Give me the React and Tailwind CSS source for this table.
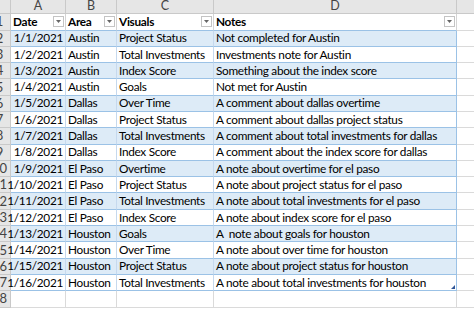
import React from 'react';

// --- Sheet data ---
const rows = [
  ['1/1/2021', 'Austin', 'Project Status', 'Not completed for Austin'],
  ['1/2/2021', 'Austin', 'Total Investments', 'Investments note for Austin'],
  ['1/3/2021', 'Austin', 'Index Score', 'Something about the index score'],
  ['1/4/2021', 'Austin', 'Goals', 'Not met for Austin'],
  ['1/5/2021', 'Dallas', 'Over Time', 'A comment about dallas overtime'],
  ['1/6/2021', 'Dallas', 'Project Status', 'A comment about dallas project status'],
  ['1/7/2021', 'Dallas', 'Total Investments', 'A comment about total investments for dallas'],
  ['1/8/2021', 'Dallas', 'Index Score', 'A comment about the index score for dallas'],
  ['1/9/2021', 'El Paso', 'Overtime', 'A note about overtime for el paso'],
  ['1/10/2021', 'El Paso', 'Project Status', 'A note about project status for el paso'],
  ['1/11/2021', 'El Paso', 'Total Investments', 'A note about total investments for el paso'],
  ['1/12/2021', 'El Paso', 'Index Score', 'A note about index score for el paso'],
  ['1/13/2021', 'Houston', 'Goals', 'A  note about goals for houston'],
  ['1/14/2021', 'Houston', 'Over Time', 'A note about over time for houston'],
  ['1/15/2021', 'Houston', 'Project Status', 'A note about project status for houston'],
  ['1/16/2021', 'Houston', 'Total Investments', 'A note about total investments for houston'],
];

const grid = 'grid grid-cols-[22px_55px_51px_97px_243px_60px]';

const FilterButton = () => (
  <span className="ml-auto mr-[1px] flex h-[11px] w-[11px] shrink-0 items-center justify-center border border-[#c4c4c4] bg-white">
    <svg width="5" height="3" viewBox="0 0 5 3"><path d="M0 0h5L2.5 3z" fill="#666" /></svg>
  </span>
);

const RowHead = ({ n }) => (
  <div className="flex items-center justify-center overflow-hidden whitespace-nowrap border-r border-b border-[#c9c9c9] bg-[#e6e6e6] text-[13px] tracking-normal text-[#444]">{n}</div>
);

const App = () => {
  return (
    <div className="h-[309px] w-[474px] overflow-hidden bg-white text-[11.8px] leading-none tracking-[-0.3px] text-black" style={{ fontFamily: 'Lato, "Liberation Sans", sans-serif' }}>
      <div className="ml-[-11px] w-[540px]">
        {/* column letters */}
        <div className={`${grid} h-[14px] bg-[#e6e6e6] text-[12.5px] tracking-normal text-[#444]`}>
          <div className="border-r border-b border-[#c9c9c9]" />
          {['A', 'B', 'C', 'D', 'E'].map(c => (
            <div key={c} className="flex items-center justify-center border-r border-b border-[#c9c9c9]">{c}</div>
          ))}
        </div>

        {/* table header row */}
        <div className={`${grid} h-[16.5px]`}>
          <RowHead n={1} />
          {['Date', 'Area', 'Visuals', 'Notes'].map(h => (
            <div key={h} className="flex items-center border-r border-b border-r-[#d4d4d4] border-b-[#9bc2e6] pl-[2px] font-bold">
              {h}
              <FilterButton />
            </div>
          ))}
          <div className="border-r border-b border-[#dadada]" />
        </div>

        {/* data rows */}
        {rows.map((r, i) => {
          const band = i % 2 === 0 ? 'bg-[#ddebf7]' : 'bg-white';
          const last = i === rows.length - 1;
          return (
            <div key={i} className={`${grid} h-[16.3px]`}>
              <RowHead n={i + 2} />
              <div className={`${band} flex items-center justify-end border-r border-b border-r-[#c6d9ee] border-b-[#9bc2e6] pr-[2px]`}>{r[0]}</div>
              <div className={`${band} flex items-center border-r border-b border-r-[#c6d9ee] border-b-[#9bc2e6] pl-[2px] whitespace-nowrap`}>{r[1]}</div>
              <div className={`${band} flex items-center border-r border-b border-r-[#c6d9ee] border-b-[#9bc2e6] pl-[2px] whitespace-nowrap`}>{r[2]}</div>
              <div className={`${band} relative flex items-center border-r border-b border-r-[#9bc2e6] border-b-[#9bc2e6] pl-[2px] whitespace-pre`}>
                {r[3]}
                {last && (
                  <svg className="absolute right-[1px] bottom-[1px]" width="4" height="4" viewBox="0 0 4 4"><path d="M4 0v4H0z" fill="#2f5597" /></svg>
                )}
              </div>
              <div className="border-r border-b border-[#dadada]" />
            </div>
          );
        })}

        {/* empty row 18 */}
        <div className={`${grid} h-[16.3px]`}>
          <RowHead n={18} />
          <div className="border-r border-b border-[#dadada]" />
          <div className="border-r border-b border-[#dadada]" />
          <div className="border-r border-b border-[#dadada]" />
          <div className="border-r border-b border-[#dadada]" />
          <div className="border-r border-b border-[#dadada]" />
        </div>
      </div>
    </div>
  );
};

export default App;
